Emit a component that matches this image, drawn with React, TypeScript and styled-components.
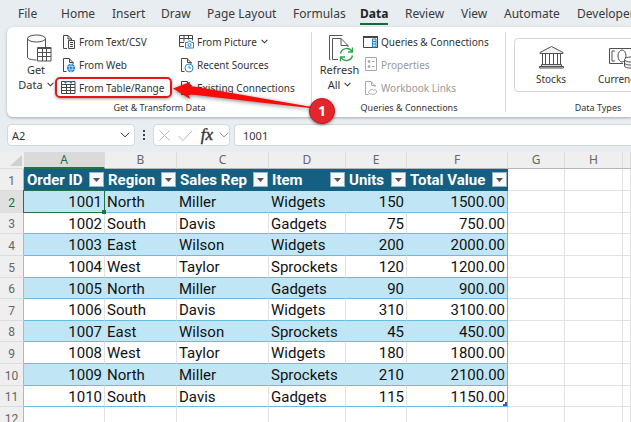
import React from "react";
import styled, { createGlobalStyle, css } from "styled-components";

const GlobalStyle = createGlobalStyle`
  *, *::before, *::after { box-sizing: border-box; }
  body { margin: 0; overflow: hidden; background: #e8edf1; font-family: "Noto Sans", sans-serif; color: #333; }
  button, input { font: inherit; color: inherit; margin: 0; }
  button { padding: 0; border: 0; background: none; white-space: nowrap; }
  svg { display: block; flex: none; }
`;

const Workbook = styled.div`
  position: relative;
  height: 100vh;
  display: flex;
  flex-direction: column;
  overflow: hidden;
`;

/* ---------- tabs ---------- */
const TabBar = styled.nav`
  display: grid;
  grid-template-columns: 43px 51px 49px 46px 86px 67px 45px 56px 43px 73px auto;
  height: 27px;
  flex: none;
  padding: 5px 0 0 18px;
  justify-content: start;
`;
const Tab = styled.button<{ $active?: boolean }>`
  justify-self: start;
  height: 20px;
  font-size: 12px;
  line-height: 18px;
  border-bottom: 2px solid ${(p) => (p.$active ? "#0f6b38" : "transparent")};
  font-weight: ${(p) => (p.$active ? 700 : 400)};
  color: ${(p) => (p.$active ? "#222" : "#3b3b3b")};
`;

/* ---------- ribbon ---------- */
const Ribbon = styled.div`
  display: flex;
  flex: none;
  height: 90px;
  margin-left: 7px;
  background: #fff;
  border-radius: 6px 0 0 6px;
  box-shadow: 0 1px 3px rgba(0, 0, 0, 0.28);
`;
const Group = styled.section<{ $width: number }>`
  position: relative;
  flex: none;
  width: ${(p) => p.$width}px;
  display: flex;
  flex-direction: column;
  justify-content: space-between;
  &:not(:last-child)::after {
    content: "";
    position: absolute;
    right: 0;
    top: 5px;
    bottom: 5px;
    width: 1px;
    background: #d8d8d8;
  }
`;
const GroupBody = styled.div`
  display: flex;
  padding-top: 3px;
`;
const GroupLabel = styled.div`
  height: 17px;
  font-size: 9px;
  line-height: 16px;
  text-align: center;
  white-space: nowrap;
`;
const BigButton = styled.button<{ $width: number }>`
  width: ${(p) => p.$width}px;
  height: 66px;
  padding: 4px 0 0 4px;
  display: flex;
  flex-direction: column;
  align-items: center;
  font-size: 11px;
  line-height: 15px;
`;
const BigIcon = styled.span<{ $inset?: number }>`
  padding-left: ${(p) => p.$inset ?? 0}px;
`;
const WithChevron = styled.span`
  display: flex;
  align-items: center;
  gap: 4px;
`;
const CommandColumn = styled.div<{ $width: number }>`
  width: ${(p) => p.$width}px;
  display: flex;
  flex-direction: column;
`;
const Command = styled.button`
  height: 23px;
  display: flex;
  align-items: center;
  gap: 3px;
  font-size: 10px;
  text-align: left;
  &:disabled { color: #999; }
`;
const IconSlot = styled.span`
  width: 15px;
  display: flex;
  justify-content: center;
  flex: none;
`;
const Gallery = styled.div`
  display: flex;
  flex: none;
  height: 54px;
  margin: 8px 0 0 8px;
  border: 1px solid #d5d5d5;
  border-radius: 4px;
  width: 260px;
`;
const TypeButton = styled.button`
  width: 72px;
  padding-top: 6px;
  display: flex;
  flex-direction: column;
  align-items: center;
  gap: 2px;
  font-size: 10px;
  line-height: 16px;
`;

/* ---------- formula bar ---------- */
const FormulaBar = styled.div`
  display: flex;
  flex: none;
  align-items: center;
  height: 35px;
  padding: 1px 0 0 7px;
`;
const field = css`
  display: flex;
  align-items: center;
  height: 22px;
  background: #fff;
  border: 1px solid #d4d8db;
  border-radius: 4px;
`;
const NameField = styled.div`
  ${field}
  width: 128px;
  padding-right: 4px;
`;
const NameInput = styled.input`
  flex: 1;
  min-width: 0;
  border: 0;
  outline: 0;
  background: none;
  padding: 0 4px;
  font-size: 11px;
`;
const DragDots = styled.span`
  width: 18px;
  display: flex;
  justify-content: center;
`;
const FxField = styled.div`
  ${field}
  width: 77px;
  padding: 0 0 0 4px;
  justify-content: space-between;
`;
const FxButton = styled.button`
  padding-left: 2px;
  font: italic 400 17px/18px "Liberation Serif", serif;
  -webkit-text-stroke: 0.4px #333;
`;
const ValueInput = styled.input`
  ${field}
  flex: 1;
  min-width: 0;
  margin-left: 4px;
  padding: 0 8px;
  border-right: 0;
  border-radius: 4px 0 0 4px;
  outline: 0;
  font-size: 11px;
`;

/* ---------- sheet ---------- */
const Sheet = styled.table`
  width: 100%;
  table-layout: fixed;
  border-collapse: separate;
  border-spacing: 0;
  background: #fff;
  font-family: Roboto, sans-serif;
  font-size: 15px;
`;
const Letter = styled.th<{ $selected?: boolean }>`
  height: 17px;
  padding: 0;
  background: ${(p) => (p.$selected ? "#dadada" : "#efefef")};
  color: ${(p) => (p.$selected ? "#217346" : "#666")};
  border-right: 1px solid #dcdcdc;
  border-bottom: ${(p) => (p.$selected ? "2px solid #217346" : "1px solid #b5b5b5")};
  font: 400 12px/14px "Noto Sans", sans-serif;
`;
const Corner = styled.td`
  padding: 0;
  background: #efefef;
  border-bottom: 1px solid #dcdcdc;
`;
const Row = styled.tr<{ $height: number }>`
  height: ${(p) => p.$height}px;
`;
const RowNumber = styled.th<{ $selected?: boolean }>`
  padding: 2px 0 0;
  font-weight: 400;
  font-size: 12px;
  line-height: 16px;
  background: ${(p) => (p.$selected ? "#e0e0e0" : "#efefef")};
  color: ${(p) => (p.$selected ? "#217346" : "#666")};
  border-right: 1px solid ${(p) => (p.$selected ? "#217346" : "#b5b5b5")};
  border-bottom: 1px solid #dcdcdc;
`;
const HeadCell = styled.th`
  padding: 0 1px 0 3px;
  background: #156082;
  border-bottom: 1px solid #156082;
  color: #fff;
  font-weight: 700;
`;
const HeadInner = styled.div`
  display: flex;
  align-items: center;
  justify-content: space-between;
  line-height: 18px;
  white-space: nowrap;
`;
const FilterButton = styled.button`
  width: 15px;
  height: 15px;
  display: flex;
  flex: none;
  align-items: center;
  justify-content: center;
  background: #f8f9fb;
  border: 1px solid #9bb0c0;
`;
const Cell = styled.td<{ $banded?: boolean; $number?: boolean; $last?: boolean }>`
  position: relative;
  padding: 1px 2px 0;
  line-height: 18px;
  color: #111;
  white-space: nowrap;
  text-align: ${(p) => (p.$number ? "right" : "left")};
  background: ${(p) => (p.$banded ? "#c0e6f5" : "#fff")};
  border-bottom: 1px solid #63bde4;
  border-right: 1px solid ${(p) => (p.$last ? "#63bde4" : p.$banded ? "#c0e6f5" : "#e2e2e2")};
`;
const BlankCell = styled.td`
  padding: 0;
  border-right: 1px solid #e2e2e2;
  border-bottom: 1px solid #e2e2e2;
`;
const Selection = styled.span`
  position: absolute;
  inset: -1px;
  border: 1px solid #217346;
  z-index: 1;
  &::after {
    content: "";
    position: absolute;
    right: -2px;
    bottom: -2px;
    width: 4px;
    height: 4px;
    background: #217346;
  }
`;
const TableHandle = styled.span`
  position: absolute;
  right: 0;
  bottom: 0;
  width: 4px;
  height: 4px;
  background: #3f55b0;
  clip-path: polygon(100% 0, 100% 100%, 0 100%, 0 50%, 50% 50%, 50% 0);
`;

/* ---------- annotation ---------- */
const Highlight = styled.span`
  position: absolute;
  left: 55px;
  top: 77px;
  width: 117px;
  height: 21px;
  border: 2px solid #e8141c;
  border-radius: 5px;
  box-shadow: 0 1px 3px rgba(0, 0, 0, 0.4);
  pointer-events: none;
`;
const Arrow = styled.svg`
  position: absolute;
  left: 168px;
  top: 76px;
  overflow: visible;
  filter: drop-shadow(0 1px 2px rgba(0, 0, 0, 0.5));
  pointer-events: none;
`;
const Step = styled.span`
  position: absolute;
  left: 309px;
  top: 98px;
  width: 26px;
  height: 26px;
  border-radius: 50%;
  border: 1px solid #c3161c;
  background: #e3262c;
  box-shadow: 0 1px 3px rgba(0, 0, 0, 0.5);
  color: #fff;
  font: 700 14px/24px "Open Sans", sans-serif;
  text-align: center;
`;

/* ---------- icons ---------- */
const Chevron = ({ size = 7, color = "#333" }: { size?: number; color?: string }) => (
  <svg width={size} height={size} viewBox="0 0 8 8" fill="none" stroke={color} strokeWidth={size > 8 ? 0.8 : 1.2}>
    <path d="M.7 2.2 4 5.500l3.300-3.300" />
  </svg>
);

const page = "M4.500 14.500H1.500V1.500h5.500l4 4v1.500M7.500 1.500v4h4";

const TextFileIcon = () => (
  <svg width="14" height="16" viewBox="0 0 14 16" fill="none" stroke="#444">
    <path d="M5 14.500H1.500V1.500h4.500l3.500 3.500v1M6 1.500v3.500h3.500" />
    <path d="M6.500 6.500h6v8h-6zM8 8.500h3M8 10.500h3M8 12.500h3" />
  </svg>
);
const WebIcon = () => (
  <svg width="14" height="16" viewBox="0 0 14 16" fill="none" stroke="#444">
    <path d={page} />
    <circle cx="9" cy="11" r="4.200" fill="#2386d1" stroke="none" />
    <path d="M5 9.600h8M5 12.400h8M9 7c-2 2.500-2 5.500 0 8M9 7c2 2.500 2 5.500 0 8" stroke="#d6ecfb" strokeWidth=".6" />
  </svg>
);
const TableIcon = () => (
  <svg width="15" height="15" viewBox="0 0 15 15" fill="none" stroke="#444">
    <path d="M.500 1.500h13.500v12H.500zM.500 4.500H14M.500 7.500H14M.500 10.500H14M5.500 4.500v9M9.500 4.500v9" />
    <path d="M2.500 1.500h4L4.500 4zM8 1.500h4L10 4z" fill="#2386d1" stroke="none" />
  </svg>
);
const PictureIcon = () => (
  <svg width="15" height="15" viewBox="0 0 15 15" fill="none" stroke="#444">
    <path d="M5 12.500H.500v-11h13v5M.500 4.500h13M.500 8.500H5M5 1.500v6M9.500 1.500v4" />
    <path d="M6.500 8.500h2l1-1.500h2l1 1.500h2v5.500h-8z" stroke="#2386d1" fill="#fff" />
    <circle cx="10.500" cy="11" r="1.500" stroke="#2386d1" />
  </svg>
);
const RecentIcon = () => (
  <svg width="14" height="16" viewBox="0 0 14 16" fill="none" stroke="#444">
    <path d={page} />
    <circle cx="9" cy="11" r="4" fill="#fff" stroke="#2386d1" />
    <path d="M9 8.500V11h2.200" stroke="#2386d1" />
  </svg>
);
const LinkFileIcon = ({ color = "#444" }: { color?: string }) => (
  <svg width="14" height="16" viewBox="0 0 14 16" fill="none" stroke={color}>
    <path d={page} />
    <path d="m7.500 13.800-.8.300a1.900 1.900 0 0 1-1.200-3.500l1.600-.9a1.900 1.900 0 0 1 2.500.7M9.500 10.200l.9-.4a1.900 1.900 0 0 1 1.300 3.500l-1.600.9a1.900 1.900 0 0 1-2.500-.7" />
  </svg>
);
const PaneIcon = () => (
  <svg width="15" height="14" viewBox="0 0 15 14" fill="none" stroke="#444">
    <path d="M.500 1.500h14v11H.500z" />
    <path d="M0 2h15" strokeWidth="2" />
    <path d="M9.500 4h3.500v8H9.500z" fill="#d7ebfa" stroke="#2386d1" />
    <path d="M10 6.500h3M10 9h3" stroke="#2386d1" />
  </svg>
);
const PropertiesIcon = () => (
  <svg width="12" height="15" viewBox="0 0 12 15" fill="none" stroke="#aaa">
    <path d="M.500 .500h11v13H.500zM7 4.500h2.500M7 9.500h2.500" />
    <path d="M3 3.500h2v2H3zM3 8.500h2v2H3z" fill="#aaa" strokeWidth=".5" />
  </svg>
);
const DatabaseIcon = () => (
  <svg width="26" height="28" viewBox="0 0 26 28" fill="none" stroke="#505050">
    <path d="M1.500 4.500v18.500c0 1.700 3.500 3 9 3M19.500 4.500V13" />
    <ellipse cx="10.500" cy="4.500" rx="9" ry="3.500" fill="#fafafa" />
    <path d="M11.500 13.500h13.500v13.500H11.500z" fill="#fff" />
    <path d="M11.500 14.500H25M11.500 18.500H25M11.500 22.500H25M16.500 15v12M20.500 15v12" />
  </svg>
);
const RefreshIcon = () => (
  <svg width="26" height="28" viewBox="0 0 26 28" fill="none" stroke="#555">
    <path d="M2.500 25.500h-1V1.500h13M10 25.500H4.500v-21H13l7 7V13M13 4.500v7h7" />
    <g stroke="#2ea44f" strokeWidth="1.400">
      <path d="M12.500 19.500a6.300 6.300 0 0 1 11.500-2M24.500 21.500a6.300 6.300 0 0 1-11.500 2" />
      <path d="M24.500 13.500v4.500H20M12.500 27.500V23H17" />
    </g>
  </svg>
);
const BankIcon = () => (
  <svg width="27" height="24" viewBox="0 0 27 24" fill="none" stroke="#505050">
    <path d="m2 7.500 11.500-6 11.500 6v1H2z" fill="#f2f2f2" />
    <path d="M4.500 9v10M7.500 9v10M11.500 9v10M15.500 9v10M19.500 9v10M22.500 9v10" />
    <path d="M3.500 19.500h20v2h-20zM1.500 21.500h24v1.500h-24z" fill="#ddd" />
  </svg>
);
const MoneyIcon = () => (
  <svg width="30" height="24" viewBox="0 0 30 24" fill="none" stroke="#505050">
    <path d="M15 18.500H1.500v-15h27v10M7 6H4v10h3M23 6h3v6" />
    <ellipse cx="14" cy="11" rx="4" ry="6" />
    <path d="M16.500 15v6c0 2.800 13 2.800 13 0v-6M16.500 18c0 2.800 13 2.800 13 0" fill="#f4f4f4" />
    <ellipse cx="23" cy="14.500" rx="6.500" ry="2.500" fill="#fff" />
  </svg>
);

/* ---------- data ---------- */
const tabs = ["File", "Home", "Insert", "Draw", "Page Layout", "Formulas", "Data", "Review", "View", "Automate", "Developer"];
const letters = ["A", "B", "C", "D", "E", "F", "G", "H", "I"];
const columnWidths = [24, 81, 72, 92, 77, 61, 101, 57, 58];
const headings = ["Order ID", "Region", "Sales Rep", "Item", "Units", "Total Value"];
const numericColumns = [0, 4, 5];
const orders = [
  ["1001", "North", "Miller", "Widgets", "150", "1500.00"],
  ["1002", "South", "Davis", "Gadgets", "75", "750.00"],
  ["1003", "East", "Wilson", "Widgets", "200", "2000.00"],
  ["1004", "West", "Taylor", "Sprockets", "120", "1200.00"],
  ["1005", "North", "Miller", "Gadgets", "90", "900.00"],
  ["1006", "South", "Davis", "Widgets", "310", "3100.00"],
  ["1007", "East", "Wilson", "Sprockets", "45", "450.00"],
  ["1008", "West", "Taylor", "Widgets", "180", "1800.00"],
  ["1009", "North", "Miller", "Sprockets", "210", "2100.00"],
  ["1010", "South", "Davis", "Gadgets", "115", "1150.00"],
];
const rowHeight = (i: number) => (i % 5 === 1 || i % 5 === 4 ? 21 : 22);

const Item = ({ icon, children, disabled }: { icon: React.ReactNode; children: React.ReactNode; disabled?: boolean }) => (
  <Command disabled={disabled}>
    <IconSlot>{icon}</IconSlot>
    <WithChevron>{children}</WithChevron>
  </Command>
);

const Blanks = ({ count }: { count: number }) => (
  <>{Array.from({ length: count }, (_, i) => <BlankCell key={i} />)}</>
);

export default function App() {
  return (
    <Workbook>
      <GlobalStyle />
      <TabBar aria-label="Ribbon tabs">
        {tabs.map((t) => (
          <Tab key={t} $active={t === "Data"}>{t}</Tab>
        ))}
      </TabBar>

      <Ribbon>
        <Group $width={305}>
          <GroupBody>
            <BigButton $width={54}>
              <BigIcon $inset={6}><DatabaseIcon /></BigIcon>
              <span>Get</span>
              <WithChevron>Data <Chevron /></WithChevron>
            </BigButton>
            <CommandColumn $width={118}>
              <Item icon={<TextFileIcon />}>From Text/CSV</Item>
              <Item icon={<WebIcon />}>From Web</Item>
              <Item icon={<TableIcon />}>From Table/Range</Item>
            </CommandColumn>
            <CommandColumn $width={130}>
              <Item icon={<PictureIcon />}>From Picture <Chevron /></Item>
              <Item icon={<RecentIcon />}>Recent Sources</Item>
              <Item icon={<LinkFileIcon />}>Existing Connections</Item>
            </CommandColumn>
          </GroupBody>
          <GroupLabel>Get &amp; Transform Data</GroupLabel>
        </Group>
        <Group $width={194}>
          <GroupBody>
            <BigButton $width={51}>
              <BigIcon $inset={2}><RefreshIcon /></BigIcon>
              <span>Refresh</span>
              <WithChevron>All <Chevron /></WithChevron>
            </BigButton>
            <CommandColumn $width={138}>
              <Item icon={<PaneIcon />}>Queries &amp; Connections</Item>
              <Item icon={<PropertiesIcon />} disabled>Properties</Item>
              <Item icon={<LinkFileIcon color="#aaa" />} disabled>Workbook Links</Item>
            </CommandColumn>
          </GroupBody>
          <GroupLabel>Queries &amp; Connections</GroupLabel>
        </Group>
        <Group $width={184}>
          <GroupBody>
            <Gallery>
              <TypeButton><BankIcon />Stocks</TypeButton>
              <TypeButton><MoneyIcon />Currencies</TypeButton>
            </Gallery>
          </GroupBody>
          <GroupLabel>Data Types</GroupLabel>
        </Group>
      </Ribbon>

      <FormulaBar>
        <NameField>
          <NameInput aria-label="Name box" defaultValue="A2" />
          <button aria-label="Show names"><Chevron size={10} /></button>
        </NameField>
        <DragDots>
          <svg width="3" height="12" fill="#444"><path d="M0 1h2v2H0zM0 5h2v2H0zM0 9h2v2H0z" /></svg>
        </DragDots>
        <FxField>
          <button aria-label="Cancel">
            <svg width="13" height="13" fill="none" stroke="#b5b5b5"><path d="m1.500 1.500 10 10m0-10-10 10" /></svg>
          </button>
          <button aria-label="Enter">
            <svg width="16" height="13" fill="none" stroke="#b5b5b5"><path d="m1.500 7 4.500 4.500L15 2" /></svg>
          </button>
          <FxButton aria-label="Insert function">fx</FxButton>
          <button aria-label="More functions"><Chevron size={10} color="#888" /></button>
        </FxField>
        <ValueInput aria-label="Formula" defaultValue="1001" />
      </FormulaBar>

      <Sheet>
        <colgroup>
          {columnWidths.map((w, i) => <col key={i} width={w} />)}
          <col />
        </colgroup>
        <thead>
          <tr>
            <Corner>
              <svg width="24" height="16"><path d="M22 3v11H10z" fill="#d0d0d0" /></svg>
            </Corner>
            {letters.map((l) => <Letter key={l} $selected={l === "A"}>{l === "I" ? "" : l}</Letter>)}
          </tr>
        </thead>
        <tbody>
          <Row $height={22}>
            <RowNumber>1</RowNumber>
            {headings.map((h) => (
              <HeadCell key={h}>
                <HeadInner>
                  {h}
                  <FilterButton aria-label={`Filter ${h}`}>
                    <svg width="7" height="4" fill="#555"><path d="M0 0h7L3.500 4z" /></svg>
                  </FilterButton>
                </HeadInner>
              </HeadCell>
            ))}
            <Blanks count={3} />
          </Row>
          {orders.map((order, r) => (
            <Row key={order[0]} $height={rowHeight(r)}>
              <RowNumber $selected={r === 0}>{r + 2}</RowNumber>
              {order.map((value, c) => (
                <Cell key={c} $banded={r % 2 === 0} $number={numericColumns.includes(c)} $last={c === 5}>
                  {value}
                  {r === 0 && c === 0 && <Selection />}
                  {r === orders.length - 1 && c === 5 && <TableHandle />}
                </Cell>
              ))}
              <Blanks count={3} />
            </Row>
          ))}
          <Row $height={22}>
            <RowNumber>12</RowNumber>
            <Blanks count={9} />
          </Row>
        </tbody>
      </Sheet>

      <Highlight />
      <Arrow width="146" height="36" viewBox="0 0 146 36">
        <path d="M5 12.500 22 6l-.5 4 7.500 1L144 31v1.200L97 27 28 19l-7.500-.5L22 23z" fill="#fb0a0a" />
      </Arrow>
      <Step>1</Step>
    </Workbook>
  );
}
